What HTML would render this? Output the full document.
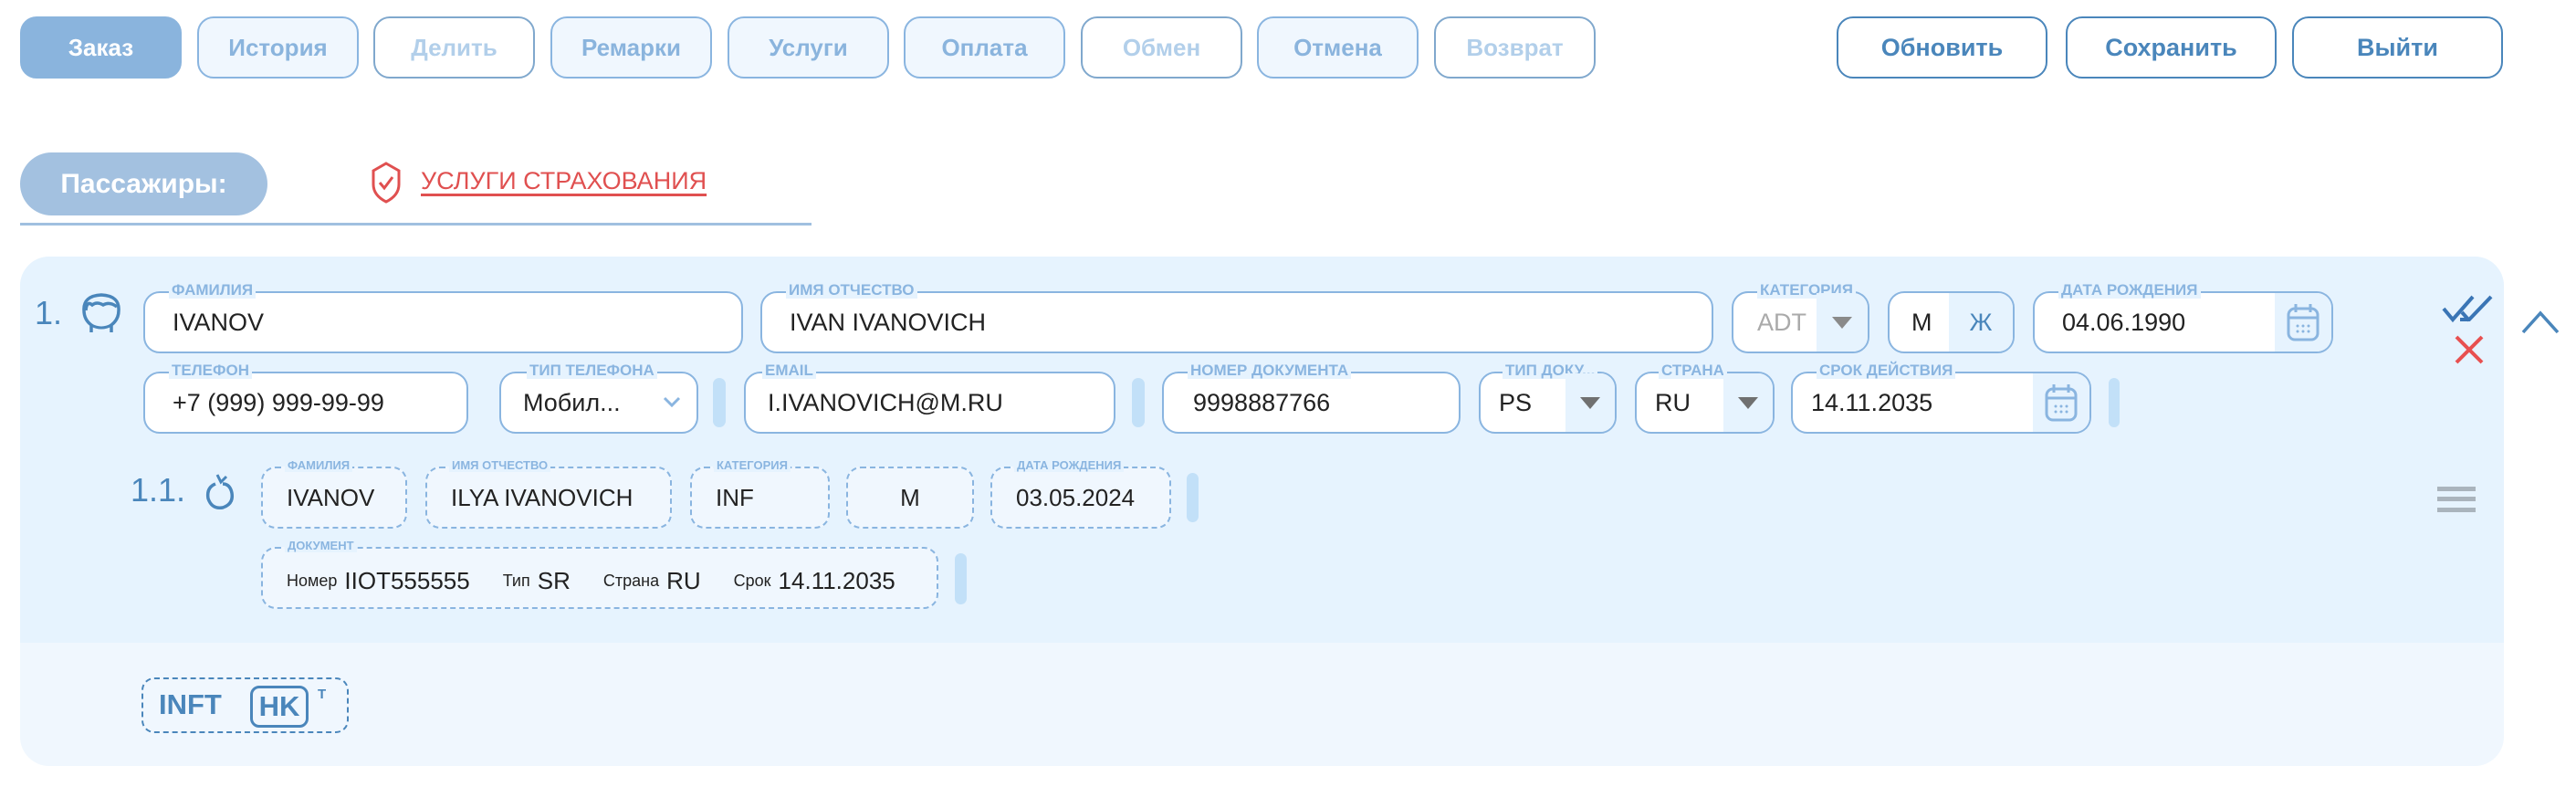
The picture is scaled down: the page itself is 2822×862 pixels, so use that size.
<!DOCTYPE html>
<html><head><meta charset="utf-8"><style>
*{box-sizing:border-box;margin:0;padding:0}
body{width:2822px;height:862px;background:#fff;position:relative;overflow:hidden;font-family:"Liberation Sans",sans-serif}
.a{position:absolute}
.tab{position:absolute;top:18px;height:68px;width:177px;border:2px solid #8ab5e0;border-radius:18px;background:#f0f7fe;color:#8ab4dd;font-size:26px;font-weight:bold;display:flex;align-items:center;justify-content:center}
.tab.act{background:#8ab4dd;color:#fff;border-color:#8ab4dd}
.tab.dis{background:#fff;color:#b2cfea;border-color:#80a8cd}
.btn{position:absolute;top:18px;height:68px;width:231px;border:2px solid #4a86bb;border-radius:18px;background:#fff;color:#4a86bb;font-size:27px;font-weight:bold;display:flex;align-items:center;justify-content:center}
.f{position:absolute;height:68px;border:2px solid #8ab5e0;border-radius:18px;background:#fff;font-size:27px;color:#222;display:flex;align-items:center;padding-left:30px}
.f .l{position:absolute;top:-12px;left:26px;font-size:17px;font-weight:bold;color:#8ab5e0;background:#e6f3fe;padding:0 3px;line-height:18px;white-space:nowrap}
.d{position:absolute;height:68px;border:2px dashed #8ab5e0;border-radius:16px;background:#f0f7fe;font-size:26px;color:#222;display:flex;align-items:center;padding-left:26px}
.d .l{position:absolute;top:-10px;left:24px;font-size:13px;font-weight:bold;color:#8ab5e0;background:#e6f3fe;padding:0 3px;line-height:14px;white-space:nowrap}
.bar{position:absolute;width:14px;border-radius:7px;background:#c2e0f8}
.dd{position:absolute;right:0;top:0;bottom:0;width:56px;background:#e6f3fe;border-radius:0 16px 16px 0;display:flex;align-items:center;justify-content:center}
.tri{width:0;height:0;border-left:11px solid transparent;border-right:11px solid transparent;border-top:13px solid #707070}
.cal{position:absolute;right:0;top:0;bottom:0;width:62px;background:#e6f3fe;border-radius:0 16px 16px 0;display:flex;align-items:center;justify-content:center}
.sm{font-size:18px;margin-right:8px}
</style></head><body>

<div class="tab act" style="left:22px">Заказ</div>
<div class="tab" style="left:216px">История</div>
<div class="tab dis" style="left:409px">Делить</div>
<div class="tab" style="left:603px">Ремарки</div>
<div class="tab" style="left:797px">Услуги</div>
<div class="tab" style="left:990px">Оплата</div>
<div class="tab dis" style="left:1184px">Обмен</div>
<div class="tab" style="left:1377px">Отмена</div>
<div class="tab dis" style="left:1571px">Возврат</div>

<div class="btn" style="left:2012px">Обновить</div>
<div class="btn" style="left:2263px">Сохранить</div>
<div class="btn" style="left:2511px">Выйти</div>

<div class="a" style="left:22px;top:167px;width:271px;height:69px;border-radius:35px;background:#a3c1e0;color:#fff;font-size:30px;font-weight:bold;display:flex;align-items:center;justify-content:center">Пассажиры:</div>
<div class="a" style="left:22px;top:244px;width:867px;height:3px;background:#a0c0e0"></div>
<svg class="a" style="left:405px;top:176px" width="36" height="48" viewBox="0 0 36 48"><path d="M18 3 L32 11 V26 Q32 38 18 45 Q4 38 4 26 V11 Z" fill="none" stroke="#e05050" stroke-width="3"/><path d="M11 24 L16 30 L25 18" fill="none" stroke="#e05050" stroke-width="3"/></svg>
<div class="a" style="left:461px;top:183px;font-size:27px;color:#e05050;text-decoration:underline;text-underline-offset:5px;text-decoration-thickness:3px;font-weight:500">УСЛУГИ СТРАХОВАНИЯ</div>

<div class="a" style="left:22px;top:281px;width:2721px;height:558px;border-radius:32px;background:#f0f7fe;overflow:hidden"><div style="height:423px;background:#e6f3fe"></div></div>

<div class="a" style="left:38px;top:322px;font-size:36px;color:#4a86bb">1.</div>
<svg class="a" style="left:88px;top:318px" width="46" height="50" viewBox="0 0 46 50"><path d="M12 46 V38 Q4 32 4 22 Q3 6 23 5 Q43 6 42 22 Q42 32 34 38 V46" fill="none" stroke="#4a86bb" stroke-width="3.5"/><path d="M6 22 Q7 11 13 16 Q18 12 25 16 Q32 12 40 18" fill="none" stroke="#4a86bb" stroke-width="3.5"/><path d="M12 38 Q23 44 34 38" fill="none" stroke="#4a86bb" stroke-width="3"/></svg>

<div class="f" style="left:157px;top:319px;width:657px"><span class="l">ФАМИЛИЯ</span>IVANOV</div>
<div class="f" style="left:833px;top:319px;width:1044px"><span class="l">ИМЯ ОТЧЕСТВО</span>IVAN IVANOVICH</div>
<div class="f" style="left:1897px;top:319px;width:151px;color:#aaa;padding-left:26px"><span class="l">КАТЕГОРИЯ</span>ADT<div class="dd"><div class="tri" style="border-top-color:#8a8a8a"></div></div></div>
<div class="f" style="left:2068px;top:319px;width:139px;padding-left:24px;overflow:hidden">M<div style="position:absolute;right:0;top:0;bottom:0;width:70px;background:#e6f3fe;color:#4a86bb;display:flex;align-items:center;justify-content:center">Ж</div></div>
<div class="f" style="left:2227px;top:319px;width:329px"><span class="l">ДАТА РОЖДЕНИЯ</span>04.06.1990<div class="cal"><svg width="38" height="46" viewBox="0 0 38 46"><rect x="3" y="8" width="32" height="34" rx="7" fill="none" stroke="#8ab5e0" stroke-width="3"/><path d="M3 18 H35 M11 3 V12 M27 3 V12" stroke="#8ab5e0" stroke-width="3"/><g fill="#8ab5e0"><circle cx="13" cy="27" r="1.5"/><circle cx="19" cy="27" r="1.5"/><circle cx="25" cy="27" r="1.5"/><circle cx="13" cy="33" r="1.5"/><circle cx="19" cy="33" r="1.5"/><circle cx="25" cy="33" r="1.5"/></g></svg></div></div>

<svg class="a" style="left:2675px;top:322px" width="58" height="32" viewBox="0 0 58 32"><path d="M2 16 L12 28 L34 3 M20 28 L30 28 L54 3" fill="none" stroke="#3a75b5" stroke-width="4"/><path d="M22 20 L30 29" stroke="#3a75b5" stroke-width="4"/></svg>
<svg class="a" style="left:2688px;top:366px" width="34" height="34" viewBox="0 0 34 34"><path d="M3 3 L31 31 M31 3 L3 31" stroke="#e85050" stroke-width="4"/></svg>
<svg class="a" style="left:2762px;top:340px" width="42" height="26" viewBox="0 0 42 26"><path d="M2 24 L21 3 L40 24" fill="none" stroke="#4a86bb" stroke-width="3.5"/></svg>

<div class="f" style="left:157px;top:407px;width:356px"><span class="l">ТЕЛЕФОН</span>+7 (999) 999-99-99</div>
<div class="f" style="left:547px;top:407px;width:218px;padding-left:24px"><span class="l" style="left:28px">ТИП ТЕЛЕФОНА</span>Мобил...<svg style="position:absolute;right:16px;top:24px" width="22" height="14" viewBox="0 0 22 14"><path d="M3 3 L11 11 L19 3" fill="none" stroke="#8ab5e0" stroke-width="3"/></svg></div>
<div class="bar" style="left:781px;top:414px;height:54px"></div>
<div class="f" style="left:815px;top:407px;width:407px;padding-left:24px"><span class="l" style="left:18px">EMAIL</span>I.IVANOVICH@M.RU</div>
<div class="bar" style="left:1240px;top:414px;height:54px"></div>
<div class="f" style="left:1273px;top:407px;width:327px;padding-left:32px"><span class="l">НОМЕР ДОКУМЕНТА</span>9998887766</div>
<div class="f" style="left:1620px;top:407px;width:151px;padding-left:20px"><span class="l" style="left:24px">ТИП ДОКУ...</span>PS<div class="dd" style="width:54px"><div class="tri"></div></div></div>
<div class="f" style="left:1791px;top:407px;width:153px;padding-left:20px"><span class="l" style="left:24px">СТРАНА</span>RU<div class="dd" style="width:54px"><div class="tri"></div></div></div>
<div class="f" style="left:1962px;top:407px;width:329px;padding-left:20px"><span class="l">СРОК ДЕЙСТВИЯ</span>14.11.2035<div class="cal"><svg width="38" height="46" viewBox="0 0 38 46"><rect x="3" y="8" width="32" height="34" rx="7" fill="none" stroke="#8ab5e0" stroke-width="3"/><path d="M3 18 H35 M11 3 V12 M27 3 V12" stroke="#8ab5e0" stroke-width="3"/><g fill="#8ab5e0"><circle cx="13" cy="27" r="1.5"/><circle cx="19" cy="27" r="1.5"/><circle cx="25" cy="27" r="1.5"/><circle cx="13" cy="33" r="1.5"/><circle cx="19" cy="33" r="1.5"/><circle cx="25" cy="33" r="1.5"/></g></svg></div></div>
<div class="bar" style="left:2310px;top:414px;height:54px;width:12px"></div>

<div class="a" style="left:143px;top:516px;font-size:36px;color:#4a86bb">1.1.</div>
<svg class="a" style="left:222px;top:518px" width="40" height="46" viewBox="0 0 40 46"><path d="M14 12 Q4 16 6 28 Q10 40 22 38 Q34 34 32 22 Q30 12 22 12" fill="none" stroke="#4a86bb" stroke-width="3.5"/><path d="M16 2 L20 10 L26 4" fill="none" stroke="#4a86bb" stroke-width="3"/></svg>

<div class="d" style="left:286px;top:511px;width:160px;padding-left:26px"><span class="l">ФАМИЛИЯ</span>IVANOV</div>
<div class="d" style="left:466px;top:511px;width:270px"><span class="l">ИМЯ ОТЧЕСТВО</span>ILYA IVANOVICH</div>
<div class="d" style="left:756px;top:511px;width:153px"><span class="l">КАТЕГОРИЯ</span>INF</div>
<div class="d" style="left:927px;top:511px;width:140px;justify-content:center;padding-left:0">M</div>
<div class="d" style="left:1085px;top:511px;width:198px;padding-left:26px"><span class="l">ДАТА РОЖДЕНИЯ</span>03.05.2024</div>
<div class="bar" style="left:1300px;top:518px;height:54px;width:13px"></div>
<div class="d" style="left:286px;top:599px;width:742px;padding-left:26px;padding-top:6px"><span class="l">ДОКУМЕНТ</span><span class="sm">Номер</span>IIOT555555<span class="sm" style="margin-left:36px">Тип</span>SR<span class="sm" style="margin-left:36px">Страна</span>RU<span class="sm" style="margin-left:36px">Срок</span>14.11.2035</div>
<div class="bar" style="left:1046px;top:606px;height:56px;width:13px"></div>
<div class="a" style="left:2670px;top:533px;width:42px;height:5px;background:#aab4bd"></div>
<div class="a" style="left:2670px;top:544px;width:42px;height:5px;background:#aab4bd"></div>
<div class="a" style="left:2670px;top:556px;width:42px;height:5px;background:#aab4bd"></div>

<div class="a" style="left:155px;top:742px;width:227px;height:61px;border:2px dashed #4a86bb;border-radius:14px"></div>
<div class="a" style="left:174px;top:754px;font-size:31px;font-weight:bold;color:#4a86bb">INFT</div>
<div class="a" style="left:274px;top:751px;width:64px;height:46px;border:3px solid #4a86bb;border-radius:10px;font-size:31px;font-weight:bold;color:#4a86bb;display:flex;align-items:center;justify-content:center">HK</div>
<div class="a" style="left:348px;top:752px;font-size:15px;font-weight:bold;color:#4a86bb">T</div>
</body></html>
